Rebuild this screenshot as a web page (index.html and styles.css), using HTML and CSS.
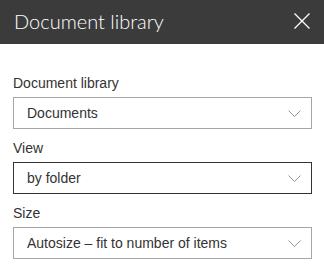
FILE: index.html
```html
<!DOCTYPE html>
<html>
<head>
<meta charset="utf-8">
<link rel="stylesheet" href="styles.css">
</head>
<body>
<div class="header">
  <div class="title">Document library</div>
  <svg class="close" width="16" height="16" viewBox="0 0 16 16"><path d="M0.5 0.5 L15.5 15.5 M15.5 0.5 L0.5 15.5" stroke="#fff" stroke-width="1.3" fill="none"/></svg>
</div>
<div class="content">
  <div class="field">
    <div class="label">Document library</div>
    <div class="dropdown">
      <span class="value">Documents</span>
      <svg class="chev" width="13" height="7" viewBox="0 0 13 7"><polyline points="0.5,0.5 6.5,6.5 12.5,0.5" stroke="#8a8a8a" stroke-width="0.9" fill="none"/></svg>
    </div>
  </div>
  <div class="field">
    <div class="label">View</div>
    <div class="dropdown focused">
      <span class="value">by folder</span>
      <svg class="chev" width="13" height="7" viewBox="0 0 13 7"><polyline points="0.5,0.5 6.5,6.5 12.5,0.5" stroke="#8a8a8a" stroke-width="0.9" fill="none"/></svg>
    </div>
  </div>
  <div class="field">
    <div class="label">Size</div>
    <div class="dropdown">
      <span class="value">Autosize – fit to number of items</span>
      <svg class="chev" width="13" height="7" viewBox="0 0 13 7"><polyline points="0.5,0.5 6.5,6.5 12.5,0.5" stroke="#8a8a8a" stroke-width="0.9" fill="none"/></svg>
    </div>
  </div>
</div>
</body>
</html>
```
FILE: styles.css
```css
html, body {
  margin: 0;
  padding: 0;
  background: #fff;
}
body {
  font-family: "Segoe UI", "Liberation Sans", Arial, sans-serif;
  color: #333;
  width: 324px;
  height: 277px;
  overflow: hidden;
}
.header {
  height: 44px;
  background: #3b3b3b;
  display: flex;
  align-items: center;
  justify-content: space-between;
  padding: 0 14px 0 14px;
  box-sizing: border-box;
}
.title {
  color: #fff;
  font-family: "Segoe UI", Lato, "Open Sans", sans-serif;
  font-size: 20px;
  font-weight: 300;
  line-height: 24px;
  margin-top: -3px;
}
.close {
  display: block;
  margin-top: -3px;
}
.content {
  padding: 24px 12px 0 13px;
}
.field {
  margin-bottom: 4px;
}
.label {
  font-size: 14px;
  line-height: 20px;
  padding: 5px 0 4px 0;
}
.dropdown {
  height: 32px;
  box-sizing: border-box;
  border: 1px solid #a6a6a6;
  display: flex;
  align-items: center;
  justify-content: space-between;
  padding: 0 10px 0 13px;
  font-size: 14px;
}
.dropdown.focused {
  border-color: #333;
}
.value {
  line-height: 30px;
}
.chev {
  display: block;
}
```
